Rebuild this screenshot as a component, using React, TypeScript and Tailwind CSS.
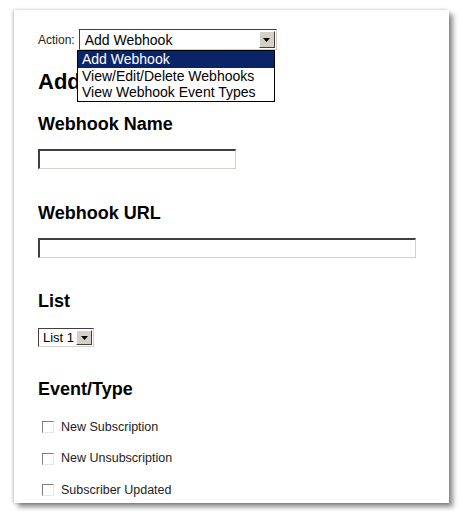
const font = { fontFamily: '"Liberation Sans", Arial, sans-serif' };

const Arrow = ({ h }: { h: string }) => (
  <div
    className={`flex ${h} w-[16px] items-center justify-center bg-[#d4d0c8] border border-t-white border-l-white border-b-[#404040] border-r-[#404040]`}
  >
    <svg width="7" height="4" viewBox="0 0 7 4">
      <path d="M0 0h7L3.5 4z" fill="#000" />
    </svg>
  </div>
);

const Checkbox = ({ label }: { label: string }) => (
  <div className="flex h-[16px] items-center">
    <span className="ml-[4px] mr-[7px] inline-block h-[12px] w-[12px] border border-t-[#808080] border-l-[#808080] border-b-[#e6e6e6] border-r-[#e6e6e6] bg-white" />
    <span className="text-[12.5px] text-[#222]">{label}</span>
  </div>
);

export default function App() {
  return (
    <div className="min-h-[521px] w-[463px] bg-white pt-[10px] pl-[14px]" style={font}>
      <div className="relative h-[493px] w-[435px] overflow-hidden bg-white pl-[24px] pt-[19px] text-black shadow-[-1px_0_3px_rgba(0,0,0,0.25),4px_4px_5px_rgba(0,0,0,0.45)]">
        {/* action row */}
        <div className="flex h-[21px] items-center">
          <span className="mr-[4px] text-[12px] text-[#222]">Action:</span>
          <div className="flex h-[21px] w-[198px] items-center justify-between border border-t-[#404040] border-l-[#404040] border-b-[#d4d0c8] border-r-[#d4d0c8] bg-white pr-[1px]">
            <span className="pl-[5px] text-[14px] leading-none">Add Webhook</span>
            <Arrow h="h-[17px]" />
          </div>
        </div>

        {/* open dropdown over the page */}
        <div className="absolute left-[63px] top-[40px] z-10 w-[198px] border border-black bg-white text-[14px] leading-[16.5px]">
          <div className="bg-[#0a246a] pl-[4px] text-white">Add Webhook</div>
          <div className="pl-[4px]">View/Edit/Delete Webhooks</div>
          <div className="pl-[4px]">View Webhook Event Types</div>
        </div>

        <h1 className="mt-[19px] text-[22px] font-bold leading-[26px]">Add Webhook</h1>

        <h3 className="mt-[18px] text-[18px] font-bold leading-[22px]">Webhook Name</h3>
        <input className="mt-[14px] block h-[20px] w-[198px] border-2 border-t-[#404040] border-l-[#404040] border-b-[#d4d0c8] border-r-[#d4d0c8] border-b-1 border-r-1 outline-none" />

        <h3 className="mt-[33px] text-[18px] font-bold leading-[22px]">Webhook URL</h3>
        <input className="mt-[14px] block h-[20px] w-[378px] border-2 border-t-[#404040] border-l-[#404040] border-b-[#d4d0c8] border-r-[#d4d0c8] border-b-1 border-r-1 outline-none" />

        <h3 className="mt-[32px] text-[18px] font-bold leading-[22px]">List</h3>
        <div className="mt-[16px] flex h-[19px] w-[56px] items-center justify-between border border-t-[#404040] border-l-[#404040] border-b-[#d4d0c8] border-r-[#d4d0c8] bg-white pr-[1px]">
          <span className="pl-[4px] text-[13px] leading-none">List 1</span>
          <Arrow h="h-[15px]" />
        </div>

        <h3 className="mt-[31px] text-[18px] font-bold leading-[22px]">Event/Type</h3>
        <div className="mt-[19px] flex flex-col gap-[15.5px]">
          <Checkbox label="New Subscription" />
          <Checkbox label="New Unsubscription" />
          <Checkbox label="Subscriber Updated" />
        </div>
      </div>
    </div>
  );
}
